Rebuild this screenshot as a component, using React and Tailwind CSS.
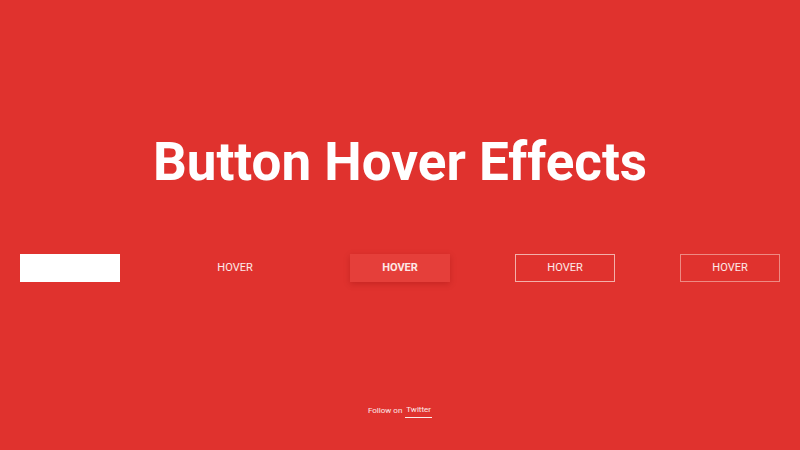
export default function App() {
  const base =
    "w-[100px] h-[28px] flex items-center justify-center text-[11px] uppercase";
  return (
    <div
      className="w-[800px] h-[450px] bg-[#e0322e] text-white flex flex-col items-center overflow-hidden"
      style={{ fontFamily: "Roboto, 'Liberation Sans', sans-serif" }}
    >
      <h1 className="mt-[131px] text-[53px] leading-[62px] font-bold">
        Button Hover Effects
      </h1>
      <div className="mt-[61px] w-full px-[20px] flex justify-between items-center">
        <div className={`${base} bg-white text-white`}>Hover</div>
        <div className={`${base} text-white/90`}>Hover</div>
        <div className={`${base} bg-[#e53f3a] font-bold text-[#fde8e6] shadow-[0_2px_6px_rgba(120,0,0,0.25)]`}>
          Hover
        </div>
        <div className={`${base} border border-[#f3b0aa] text-white/90`}>Hover</div>
        <div className={`${base} border border-[#ee8a83] text-white/90`}>Hover</div>
      </div>
      <div className="mt-[122px] text-[8px] leading-[12px] text-white/90 flex items-center gap-[3px]">
        <span>Follow on</span>
        <span className="border-b border-white/90 pb-[1px] px-[1px]">Twitter</span>
      </div>
    </div>
  );
}
